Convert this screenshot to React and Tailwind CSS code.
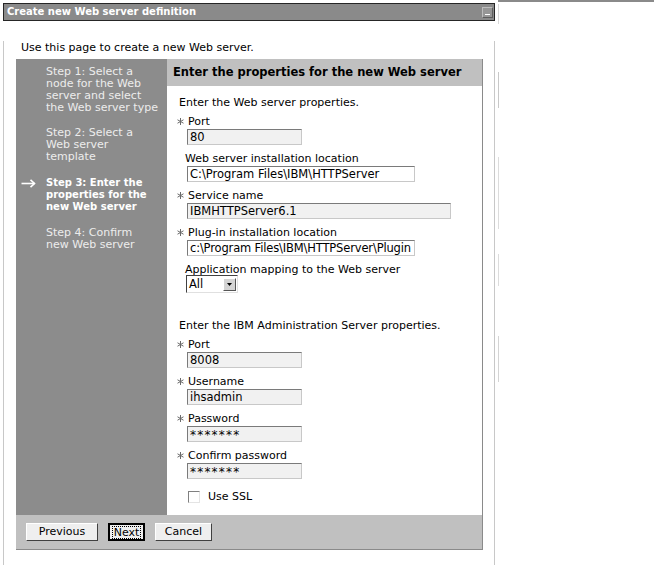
import React from 'react'

function Star() {
  return (
    <svg width="7" height="7" viewBox="0 0 7 7" className="shrink-0">
      <g stroke="#6b6b6b" strokeWidth="1">
        <line x1="3.5" y1="0" x2="3.5" y2="7" />
        <line x1="0.5" y1="1.8" x2="6.5" y2="5.2" />
        <line x1="0.5" y1="5.2" x2="6.5" y2="1.8" />
      </g>
    </svg>
  )
}

function Field({ label, value, width, required, white, secret, tight }) {
  let text = 'text-[11.5px] leading-[14px]'
  if (secret) text = 'text-[12px] leading-[17px] tracking-[1.2px]'
  if (tight) text = 'text-[11.5px] leading-[14px] tracking-[-0.15px]'
  return (
    <div className="mb-[7px]">
      {required ? (
        <div className="flex items-center h-[13px] leading-[13px]">
          <Star />
          <span className="ml-[4px]">{label}</span>
        </div>
      ) : (
        <div className="h-[13px] leading-[13px] ml-[8px]">{label}</div>
      )}
      <div
        className={
          'mt-[1px] ml-[10px] h-[16px] border border-[#7a7a7a] border-b-[#c8c8c8] border-r-[#c8c8c8] pl-[2px] overflow-hidden whitespace-nowrap ' +
          (white ? 'bg-white ' : 'bg-[#f1f1f1] ') +
          text
        }
        style={{ width }}
      >
        {value}
      </div>
    </div>
  )
}

function Button({ children, focused, width }) {
  if (focused) {
    return (
      <div className="h-[18px] border-2 border-black bg-[#efefef] flex items-center justify-center" style={{ width }}>
        <span className="border border-dotted border-black leading-[11px] px-[1px]">{children}</span>
      </div>
    )
  }
  return (
    <div
      className="h-[18px] border border-t-white border-l-white border-b-[#404040] border-r-[#404040] bg-[#efefef] flex items-center justify-center leading-[14px]"
      style={{ width }}
    >
      {children}
    </div>
  )
}

export default function App() {
  return (
    <div className="w-[665px] h-[565px] bg-white flex overflow-hidden text-black text-[11px] font-['DejaVu_Sans',sans-serif]">
      <div className="pt-[3px] pl-[3px] w-[495px] shrink-0">
        <div className="w-[492px]">
          {/* title bar */}
          <div className="h-[18px] border border-[#262626] bg-[#8a8a8a] flex items-center justify-between pl-[3px] pr-[1px]">
            <span className="text-white font-bold text-[10px] leading-[12px]">Create new Web server definition</span>
            <div className="w-[11px] h-[11px] bg-[#969696] border border-t-[#bdbdbd] border-l-[#bdbdbd] border-b-[#5e5e5e] border-r-[#5e5e5e] flex items-end justify-center pb-[2px]">
              <div className="w-[5px] h-[1px] bg-white" />
            </div>
          </div>

          <div className="h-[542px] border-x border-b border-[#c8c8c8] px-[12px]">
            <div className="mt-[20px] ml-[5px] leading-[13px]">Use this page to create a new Web server.</div>

            <div className="mt-[5px] w-[467px] border-r border-b border-[#8a8a8a]">
              <div className="flex h-[456px]">
                {/* steps */}
                <div className="w-[151px] shrink-0 bg-[#8c8c8c] pt-[7px] text-[#ececec] leading-[12px] whitespace-nowrap">
                  <div className="pl-[30px]">
                    Step 1: Select a<br />node for the Web<br />server and select<br />the Web server type
                  </div>
                  <div className="pl-[30px] mt-[13px]">
                    Step 2: Select a<br />Web server<br />template
                  </div>
                  <div className="mt-[14px] flex">
                    <div className="w-[30px] pl-[5px] pt-[2px]">
                      <svg width="15" height="9" viewBox="0 0 15 9">
                        <g stroke="white" strokeWidth="1.6" fill="none">
                          <line x1="0.5" y1="4.5" x2="13.5" y2="4.5" />
                          <polyline points="9.5,0.8 13.5,4.5 9.5,8.2" />
                        </g>
                      </svg>
                    </div>
                    <div className="text-white font-bold text-[10px]">
                      Step 3: Enter the<br />properties for the<br />new Web server
                    </div>
                  </div>
                  <div className="pl-[30px] mt-[14px]">
                    Step 4: Confirm<br />new Web server
                  </div>
                </div>

                {/* content */}
                <div className="flex-1 flex flex-col">
                  <div className="h-[27px] bg-[#c0c0c0] flex items-center pl-[6px] font-bold text-[11.5px]">
                    Enter the properties for the new Web server
                  </div>
                  <div className="pl-[10px] pt-[10px]">
                    <div className="ml-[2px] leading-[13px] mb-[6px]">Enter the Web server properties.</div>
                    <Field label="Port" value="80" width={115} required />
                    <Field label="Web server installation location" value="C:\Program Files\IBM\HTTPServer" width={228} white />
                    <Field label="Service name" value="IBMHTTPServer6.1" width={264} required />
                    <Field label="Plug-in installation location" value="c:\Program Files\IBM\HTTPServer\Plugin" width={228} required white tight />
                    <div className="ml-[8px] h-[12px] leading-[13px]">Application mapping to the Web server</div>
                    <div className="ml-[9px] w-[52px] h-[18px] border border-t-[#404040] border-l-[#404040] border-b-[#e0e0e0] border-r-[#e0e0e0] bg-white flex items-center justify-between pl-[2px] pr-[1px]">
                      <span className="leading-[14px] text-[11.5px]">All</span>
                      <div className="w-[13px] h-[13px] bg-[#d4d4d4] border border-t-white border-l-white border-b-[#555] border-r-[#555] flex items-center justify-center">
                        <svg width="5" height="3" viewBox="0 0 5 3">
                          <polygon points="0,0 5,0 2.5,3" fill="#000" />
                        </svg>
                      </div>
                    </div>

                    <div className="ml-[2px] mt-[26px] leading-[13px] mb-[6px]">Enter the IBM Administration Server properties.</div>
                    <Field label="Port" value="8008" width={115} required />
                    <Field label="Username" value="ihsadmin" width={115} required />
                    <Field label="Password" value="*******" width={115} required secret />
                    <Field label="Confirm password" value="*******" width={115} required secret />
                    <div className="flex items-center ml-[11px] mt-[11px]">
                      <div className="w-[12px] h-[12px] border border-t-[#808080] border-l-[#808080] border-b-[#e4e4e4] border-r-[#e4e4e4] bg-white" />
                      <span className="ml-[8px] leading-[13px]">Use SSL</span>
                    </div>
                  </div>
                </div>
              </div>

              {/* button bar */}
              <div className="h-[34px] bg-[#c0c0c0] flex items-center gap-[10px] pl-[10px]">
                <Button width={72}>Previous</Button>
                <Button width={37} focused>Next</Button>
                <Button width={57}>Cancel</Button>
              </div>
            </div>
          </div>
        </div>
      </div>

      {/* stray edge of the next frame */}
      <div className="ml-[3px] w-[156px] flex flex-col">
        <div className="h-[2px] bg-[#8a8a8a]" />
        <div className="h-[20px] w-[1px] bg-[#d8d8d8] mt-[2px]" />
        <div className="h-[36px] w-[1px] bg-[#c8c8c8] mt-[48px]" />
        <div className="h-[72px] w-[1px] bg-[#dcdcdc] mt-[49px]" />
        <div className="h-[32px] w-[1px] bg-[#dcdcdc] mt-[25px]" />
        <div className="h-[46px] w-[1px] bg-[#d4d4d4] mt-[50px]" />
      </div>
    </div>
  )
}
